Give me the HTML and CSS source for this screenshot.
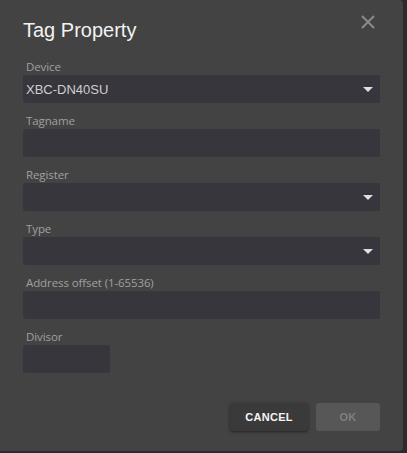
FILE: index.html
```html
<!DOCTYPE html>
<html>
<head>
<meta charset="utf-8">
<link rel="stylesheet" href="styles.css">
</head>
<body>
<div class="dialog">
  <button class="close" aria-label="Close">
    <svg width="16" height="16" viewBox="0 0 16 16"><path d="M2 2 L14 14 M14 2 L2 14" stroke="#8a8a8a" stroke-width="2" fill="none"/></svg>
  </button>
  <h1 class="title">Tag Property</h1>
  <div class="fields">
    <div class="field">
      <label class="label">Device</label>
      <div class="input select"><span class="value">XBC-DN40SU</span><span class="arrow"></span></div>
    </div>
    <div class="field">
      <label class="label">Tagname</label>
      <div class="input"></div>
    </div>
    <div class="field">
      <label class="label">Register</label>
      <div class="input select"><span class="value"></span><span class="arrow"></span></div>
    </div>
    <div class="field">
      <label class="label">Type</label>
      <div class="input select"><span class="value"></span><span class="arrow"></span></div>
    </div>
    <div class="field">
      <label class="label">Address offset (1-65536)</label>
      <div class="input"></div>
    </div>
    <div class="field">
      <label class="label">Divisor</label>
      <div class="input short"></div>
    </div>
  </div>
  <div class="actions">
    <button class="btn cancel">CANCEL</button>
    <button class="btn ok">OK</button>
  </div>
</div>
</body>
</html>
```

FILE: styles.css
```css
html, body {
  margin: 0;
  padding: 0;
  width: 407px;
  height: 453px;
  overflow: hidden;
  background: #2b2b2b;
}
.dialog {
  position: relative;
  box-sizing: border-box;
  width: 403px;
  height: 451px;
  background: #434343;
  border-radius: 0 4px 4px 0;
  padding: 18px 23px 0 23px;
  font-family: "Liberation Sans", Arial, sans-serif;
}
.close {
  position: absolute;
  top: 14px;
  right: 27px;
  width: 16px;
  height: 16px;
  padding: 0;
  border: 0;
  background: none;
  display: flex;
}
.title {
  margin: 0;
  font-size: 20px;
  line-height: 24px;
  font-weight: normal;
  color: #f2f2f2;
  height: 41px;
}
.fields {
  display: flex;
  flex-direction: column;
  gap: 10px;
}
.field {
  display: flex;
  flex-direction: column;
}
.label {
  font-family: "Open Sans", "Noto Sans", sans-serif;
  font-size: 11.5px;
  line-height: 16px;
  color: #a0a0a0;
  padding-left: 3px;
  letter-spacing: -0.1px;
}
.input {
  box-sizing: border-box;
  height: 28px;
  background: #37363c;
  border-radius: 2px;
  display: flex;
  align-items: center;
  justify-content: space-between;
  padding: 0 7px 0 3px;
}
.input.short {
  width: 87px;
}
.value {
  font-size: 13px;
  color: #cfcfcf;
}
.arrow {
  width: 0;
  height: 0;
  border-left: 5px solid transparent;
  border-right: 5px solid transparent;
  border-top: 5px solid #e0e0e0;
}
.actions {
  display: flex;
  justify-content: flex-end;
  gap: 8px;
  margin-top: 30px;
}
.btn {
  height: 28px;
  border: 0;
  border-radius: 3px;
  font-family: "Liberation Sans", Arial, sans-serif;
  font-weight: bold;
  font-size: 11px;
  letter-spacing: 0.3px;
  padding: 0;
}
.cancel {
  width: 78px;
  background: #3a3a3a;
  color: #f5f5f5;
  box-shadow: 0 1px 3px rgba(0,0,0,0.5);
}
.ok {
  width: 64px;
  background: #575757;
  color: #7f7f7f;
}
```
